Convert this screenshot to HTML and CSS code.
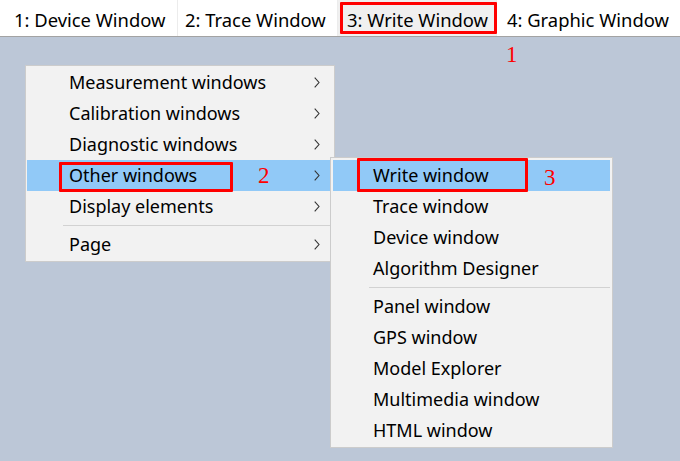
FILE: index.html
```html
<!DOCTYPE html>
<html>
<head>
<meta charset="utf-8">
<link rel="stylesheet" href="styles.css">
</head>
<body>
<div class="screen">
  <div class="tabbar">
    <div class="tab">1: Device Window</div>
    <div class="tab">2: Trace Window</div>
    <div class="tab active">3: Write Window</div>
    <div class="tab">4: Graphic Window</div>
  </div>

  <div class="menu menu-main">
    <div class="item"><span>Measurement windows</span><svg class="chev" viewBox="0 0 6 11"><path d="M0.7 0.7 L5 5.5 L0.7 10.3"/></svg></div>
    <div class="item"><span>Calibration windows</span><svg class="chev" viewBox="0 0 6 11"><path d="M0.7 0.7 L5 5.5 L0.7 10.3"/></svg></div>
    <div class="item"><span>Diagnostic windows</span><svg class="chev" viewBox="0 0 6 11"><path d="M0.7 0.7 L5 5.5 L0.7 10.3"/></svg></div>
    <div class="item hl"><span>Other windows</span><svg class="chev" viewBox="0 0 6 11"><path d="M0.7 0.7 L5 5.5 L0.7 10.3"/></svg></div>
    <div class="item"><span>Display elements</span><svg class="chev" viewBox="0 0 6 11"><path d="M0.7 0.7 L5 5.5 L0.7 10.3"/></svg></div>
    <div class="sep sep-main"></div>
    <div class="item"><span>Page</span><svg class="chev" viewBox="0 0 6 11"><path d="M0.7 0.7 L5 5.5 L0.7 10.3"/></svg></div>
  </div>

  <div class="menu menu-sub">
    <div class="item hl"><span>Write window</span></div>
    <div class="item"><span>Trace window</span></div>
    <div class="item"><span>Device window</span></div>
    <div class="item"><span>Algorithm Designer</span></div>
    <div class="sep sep-sub"></div>
    <div class="item"><span>Panel window</span></div>
    <div class="item"><span>GPS window</span></div>
    <div class="item"><span>Model Explorer</span></div>
    <div class="item"><span>Multimedia window</span></div>
    <div class="item"><span>HTML window</span></div>
  </div>

  <div class="mark mark1"></div>
  <div class="mark mark2"></div>
  <div class="mark mark3"></div>
  <div class="num num1">1</div>
  <div class="num num2">2</div>
  <div class="num num3">3</div>
</div>
</body>
</html>
```

FILE: styles.css
```css
html, body {
  margin: 0;
  padding: 0;
}
body {
  width: 680px;
  height: 461px;
  overflow: hidden;
  font-family: "Noto Sans", "Open Sans", sans-serif;
  color: #000;
}
.screen {
  position: relative;
  width: 680px;
  height: 461px;
  background: #bcc7d7;
}
.tabbar {
  display: flex;
  height: 36px;
  padding-left: 4px;
  background: #ffffff;
  border-bottom: 1px solid #a3a3a3;
  box-sizing: content-box;
}
.tab {
  height: 36px;
  line-height: 39px;
  font-size: 18.4px;
  padding: 0 10px;
  border-right: 1px solid #ececec;
  white-space: nowrap;
  box-sizing: border-box;
  overflow: hidden;
}
.tab:nth-child(1) { width: 174px; }
.tab:nth-child(2) { width: 160px; padding-left: 7px; }
.tab.active {
  width: 159px;
  background: #f0f0f0;
  padding-left: 9px;
}
.tab:nth-child(4) { width: 182px; padding-left: 10px; border-right: none; }

.menu {
  position: absolute;
  background: #f2f2f2;
  border: 1px solid #cccccc;
  box-sizing: border-box;
  display: flex;
  flex-direction: column;
}
.menu-main {
  left: 25px;
  top: 65px;
  width: 310px;
  height: 197px;
  padding: 1px;
}
.menu-sub {
  left: 330px;
  top: 157px;
  width: 283px;
  height: 291px;
  padding: 2px 2px 1px;
}
.item {
  height: 31px;
  flex: none;
  display: flex;
  align-items: center;
  font-size: 18px;
  white-space: nowrap;
}
.menu-main .item { padding-left: 42px; padding-right: 13px; }
.menu-sub .item { padding-left: 40px; }
.item span { flex: 1; line-height: 31px; padding-bottom: 0; }
.item.hl { background: #91c9f7; }
.chev {
  width: 6px;
  height: 11px;
  fill: none;
  stroke: #333333;
  stroke-width: 1.1;
}
.sep {
  flex: none;
  height: 1px;
  background: #d2d2d2;
  margin-top: 3px;
  margin-bottom: 3px;
}
.sep-main { margin-left: 36px; }
.sep-sub { margin-left: 36px; }

.mark {
  position: absolute;
  border: 3px solid #ff0000;
  box-sizing: border-box;
  border-radius: 1px;
}
.mark1 { left: 340px; top: 2px; width: 157px; height: 32px; }
.mark2 { left: 59px; top: 162px; width: 174px; height: 30px; }
.mark3 { left: 357px; top: 158px; width: 171px; height: 34px; }

.num {
  position: absolute;
  font-family: "Liberation Serif", "DejaVu Serif", serif;
  font-size: 23px;
  line-height: 22px;
  color: #ff0000;
}
.num1 { left: 506px; top: 44px; }
.num2 { left: 258px; top: 165px; }
.num3 { left: 544px; top: 167px; }
```
